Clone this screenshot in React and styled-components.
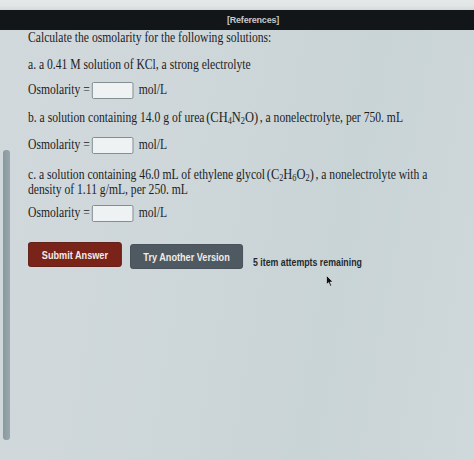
import React from "react";
import styled, { createGlobalStyle } from "styled-components";

const Global = createGlobalStyle`
  html, body { margin: 0; padding: 0; }
  body {
    width: 474px;
    height: 460px;
    overflow: hidden;
    background: #cbd4d7;
  }
`;

const Page = styled.div`
  position: relative;
  width: 474px;
  height: 460px;
  overflow: hidden;
  display: flex;
  flex-direction: column;
  background: linear-gradient(100deg, #d2d9dc 0%, #cdd6d9 45%, #c9d4d7 70%, #cfd8da 100%);
`;

const TopStrip = styled.div`
  height: 10px;
  background: linear-gradient(180deg, #e6e9ea 0%, #e1e5e6 60%, #d3d8da 100%);
  flex-shrink: 0;
`;

const HeaderBar = styled.div`
  height: 20px;
  flex-shrink: 0;
  background: #121619;
  display: flex;
  align-items: center;
  justify-content: center;
  padding-left: 32px;
`;

const RefLabel = styled.span`
  font-family: "Liberation Sans", Arial, sans-serif;
  font-weight: bold;
  font-size: 9px;
  color: #c9c9c9;
  letter-spacing: -0.2px;
`;

const Body = styled.div`
  flex: 1;
  display: flex;
  overflow: hidden;
`;

const Rail = styled.div`
  width: 28px;
  flex-shrink: 0;
  padding: 120px 0 0 3px;
  box-sizing: border-box;
`;

const RailBar = styled.div`
  width: 7px;
  height: 290px;
  border-radius: 3px;
  background: linear-gradient(90deg, #8a999e, #98a7ab);
`;

const Content = styled.div`
  width: 560px;
  flex-shrink: 0;
  transform: scaleX(0.83);
  transform-origin: left top;
  font-family: "Liberation Serif", "Times New Roman", serif;
  font-size: 14px;
  color: #1b1d1f;
  display: flex;
  flex-direction: column;
  align-items: flex-start;
`;

const Line = styled.div`
  height: ${(p) => p.$lh || 16}px;
  line-height: ${(p) => p.$lh || 16}px;
  margin-top: ${(p) => p.$mt || 0}px;
  white-space: nowrap;
`;

const Formula = styled.span`
  font-size: 15px;
  line-height: 1;
  margin: 0 2px;
  sub {
    font-size: 10px;
    line-height: 0;
    vertical-align: -2px;
  }
`;

const AnswerRow = styled.div`
  display: flex;
  align-items: center;
  height: 16px;
  margin-top: ${(p) => p.$mt}px;
`;

const AnswerBox = styled.div`
  width: 48px;
  height: 15px;
  margin: 0 6px 0 3px;
  background: #eef2f3;
  border: 1px solid #7c8589;
  border-radius: 2px;
`;

const ButtonRow = styled.div`
  display: flex;
  align-items: center;
  margin-top: 19px;
  gap: 10px;
`;

const Button = styled.div`
  height: 25px;
  width: ${(p) => p.$w}px;
  display: flex;
  align-items: center;
  justify-content: center;
  box-sizing: border-box;
  border-radius: 3px;
  font-family: "Liberation Sans", Arial, sans-serif;
  font-weight: bold;
  font-size: 11px;
  color: #f1ece8;
  background: ${(p) => p.$bg};
  border: 1px solid ${(p) => p.$bd};
  margin-top: ${(p) => p.$mt || 0}px;
`;

const Attempts = styled.span`
  font-family: "Liberation Sans", Arial, sans-serif;
  font-weight: bold;
  font-size: 10.6px;
  color: #25292c;
  margin: 15px 0 0 2px;
`;

const Cursor = styled.svg`
  position: absolute;
  left: 326px;
  top: 275px;
`;

const Osmolarity = ({ mt }) => (
  <AnswerRow $mt={mt}>
    <span>Osmolarity =</span>
    <AnswerBox />
    <span>mol/L</span>
  </AnswerRow>
);

export default function App() {
  return (
    <>
      <Global />
      <Page>
        <TopStrip />
        <HeaderBar>
          <RefLabel>[References]</RefLabel>
        </HeaderBar>
        <Body>
          <Rail>
            <RailBar />
          </Rail>
          <Content>
            <Line $lh={16}>Calculate the osmolarity for the following solutions:</Line>
            <Line $mt={11}>a. a 0.41 M solution of KCl, a strong electrolyte</Line>
            <Osmolarity mt={9} />
            <Line $mt={12}>
              b. a solution containing 14.0 g of urea
              <Formula>
                (CH<sub>4</sub>N<sub>2</sub>O)
              </Formula>
              , a nonelectrolyte, per 750. mL
            </Line>
            <Osmolarity mt={11} />
            <Line $mt={14} $lh={15}>
              c. a solution containing 46.0 mL of ethylene glycol
              <Formula>
                (C<sub>2</sub>H<sub>6</sub>O<sub>2</sub>)
              </Formula>
              , a nonelectrolyte with a
            </Line>
            <Line $lh={15}>density of 1.11 g/mL, per 250. mL</Line>
            <Osmolarity mt={8} />
            <ButtonRow>
              <Button $w={113} $bg="#7a2318" $bd="#5c1910">
                Submit Answer
              </Button>
              <Button $w={136} $bg="#4e5961" $bd="#434c53" $mt={4}>
                Try Another Version
              </Button>
              <Attempts>5 item attempts remaining</Attempts>
            </ButtonRow>
          </Content>
        </Body>
        <Cursor width="8" height="12" viewBox="0 0 8 12">
          <path d="M0.5 0.5 L0.5 9.5 L2.6 7.6 L4.2 11.2 L5.6 10.6 L4.1 7.1 L7 7 Z" fill="#111" stroke="#eee" strokeWidth="0.6" />
        </Cursor>
      </Page>
    </>
  );
}
